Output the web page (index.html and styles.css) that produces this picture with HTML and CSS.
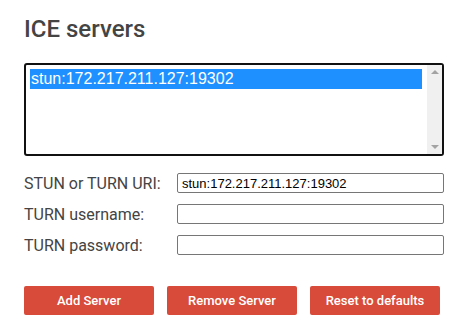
FILE: index.html
```
<!DOCTYPE html>
<html>
<head>
<meta charset="UTF-8">
<meta name="viewport" content="width=device-width, initial-scale=1">
<title>ICE servers</title>
<link rel="stylesheet" href="styles.css">
</head>
<body>
<div class="ice-panel">
	<h2>ICE servers</h2>
	<!-- 服务器列表 -->
	<div class="server-list">
		<div class="server-options">
			<div class="server-option selected">stun:172.217.211.127:19302</div>
		</div>
		<div class="list-scrollbar">
			<span class="arrow-up"></span>
			<span class="arrow-down"></span>
		</div>
	</div>
	<!-- 表单 -->
	<div class="form-rows">
		<label class="form-row">
			<span class="form-label">STUN or TURN URI:</span>
			<input type="text" value="stun:172.217.211.127:19302">
		</label>
		<label class="form-row">
			<span class="form-label">TURN username:</span>
			<input type="text">
		</label>
		<label class="form-row">
			<span class="form-label">TURN password:</span>
			<input type="password">
		</label>
	</div>
	<div class="button-row">
		<button>Add Server</button>
		<button>Remove Server</button>
		<button>Reset to defaults</button>
	</div>
</div>
</body>
</html>
```

FILE: styles.css
```
*{
	margin:0;
	padding:0;
	box-sizing:border-box;
}
body{
	font-family:'Roboto','Liberation Sans',sans-serif;
	color:#444;
	background:#fff;
}
.ice-panel{
	padding:15px 24px 0 24px;
}
.ice-panel > h2{
	font-size:24px;
	font-weight:500;
	line-height:28px;
	color:#444;
}
/* 列表框 */
.server-list{
	display:flex;
	width:420px;
	height:93px;
	margin-top:20px;
	border:2px solid #111;
	border-radius:3px;
	background:#fff;
}
.server-options{
	flex:1;
	padding:4px 5px 0 4px;
}
.server-option{
	height:20px;
	line-height:20px;
	padding-left:1px;
	font-family:'Liberation Sans',Arial,sans-serif;
	font-size:16px;
	color:#fff;
}
.server-option.selected{
	background:#1e90ff;
}
.list-scrollbar{
	width:15px;
	background:#f0f0f0;
	display:flex;
	flex-direction:column;
	justify-content:space-between;
	align-items:center;
	padding:5px 0 5px 0;
}
.arrow-up,
.arrow-down{
	width:0;
	height:0;
	border:4px solid transparent;
}
.arrow-up{
	border-top:none;
	border-bottom:4px solid #a3a3a3;
}
.arrow-down{
	border-bottom:none;
	border-top:4px solid #a3a3a3;
}
/* 表单 */
.form-rows{
	margin-top:17px;
	display:flex;
	flex-direction:column;
	gap:11px;
}
.form-row{
	display:flex;
	align-items:center;
	height:20px;
}
.form-label{
	width:153px;
	font-size:16px;
	color:#444;
}
.form-row > input{
	width:267px;
	height:20px;
	border:1px solid #767676;
	border-radius:2px;
	padding:0 4px;
	font-family:'Liberation Sans',Arial,sans-serif;
	font-size:13px;
	color:#000;
	outline:none;
}
/* 按钮 */
.button-row{
	margin-top:31px;
	display:flex;
	gap:13px;
}
.button-row > button{
	width:130px;
	height:29px;
	border:none;
	border-radius:2px;
	background:#d84a39;
	color:#fff;
	font-family:'Roboto','Liberation Sans',sans-serif;
	font-size:13px;
	font-weight:500;
}
```
